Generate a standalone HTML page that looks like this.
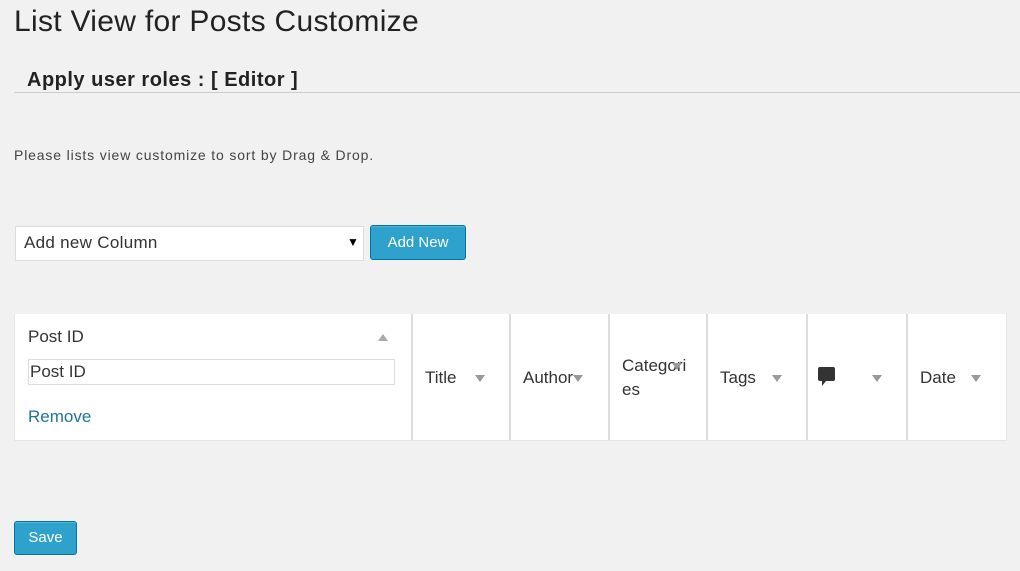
<!DOCTYPE html>
<html><head><style>
body{margin:0;width:1020px;height:571px;background:#f1f1f1;font-family:"Liberation Sans",sans-serif;color:#444;position:relative;overflow:hidden}
.a{position:absolute;white-space:nowrap}
.btn{position:absolute;background:#2ea2cc;border:1px solid #0074a2;border-radius:3px;color:#fff;font-size:15px;box-sizing:border-box;text-align:center;box-shadow:inset 0 1px 0 rgba(120,200,230,.5)}
.col{position:absolute;top:314px;height:126px;background:#fff;border-right:2px solid #ddd;box-sizing:border-box}
.arr{position:absolute;width:0;height:0;border-left:5px solid transparent;border-right:5px solid transparent;border-top:7px solid #999}
.lbl{position:absolute;top:54px;font-size:17px;color:#333}
</style></head><body>
<div class="a" style="left:14px;top:5px;font-size:30px;color:#222;letter-spacing:0.3px">List View for Posts Customize</div>
<div class="a" style="left:27px;top:69px;font-size:20px;font-weight:bold;color:#222;letter-spacing:0.5px">Apply user roles : [ Editor ]</div>
<div class="a" style="left:14px;top:92px;width:1006px;height:1px;background:#ccc"></div>
<div class="a" style="left:14px;top:147px;font-size:14px;color:#444;letter-spacing:0.85px">Please lists view customize to sort by Drag &amp; Drop.</div>
<div class="a" style="left:15px;top:226px;width:349px;height:35px;background:#fff;border:1px solid #ddd;box-sizing:border-box"></div>
<div class="a" style="left:24px;top:233px;font-size:17px;color:#333;letter-spacing:0.3px">Add new Column</div>
<div class="a" style="left:347px;top:235px;font-size:12px;color:#000">▼</div>
<div class="btn" style="left:370px;top:225px;width:96px;height:35px;line-height:33px">Add New</div>

<div class="a" style="left:14px;top:314px;width:993px;height:127px;background:#fff;border:1px solid #e5e5e5;box-sizing:border-box"></div>
<div class="col" style="left:14px;width:399px;border-left:1px solid #e5e5e5">
 <div class="a" style="left:13px;top:13px;font-size:17px;color:#333">Post ID</div>
 <div class="arr" style="left:363px;top:20px;border-top:0;border-bottom:7px solid #aaa"></div>
 <div class="a" style="left:13px;top:45px;width:367px;height:26px;border:1px solid #ddd;box-sizing:border-box;font-size:17px;color:#333;padding-left:1px;line-height:24px">Post ID</div>
 <div class="a" style="left:13px;top:93px;font-size:17px;color:#21759b">Remove</div>
</div>
<div class="col" style="left:413px;width:98px"><div class="lbl" style="left:12px">Title</div><div class="arr" style="left:62px;top:61px"></div></div>
<div class="col" style="left:511px;width:99px"><div class="lbl" style="left:12px">Author</div><div class="arr" style="left:62px;top:61px"></div></div>
<div class="col" style="left:610px;width:98px"><div class="a" style="left:12px;top:40px;font-size:17px;color:#333;line-height:24px">Categori<br>es</div><div class="arr" style="left:62px;top:49px"></div></div>
<div class="col" style="left:708px;width:100px"><div class="lbl" style="left:12px">Tags</div><div class="arr" style="left:64px;top:61px"></div></div>
<div class="col" style="left:808px;width:100px">
 <svg class="a" style="left:10px;top:53px" width="18" height="20" viewBox="0 0 18 20"><path d="M2 0h13a2 2 0 0 1 2 2v10a2 2 0 0 1-2 2H8l-4 5v-5H2a2 2 0 0 1-2-2V2a2 2 0 0 1 2-2z" fill="#333"/></svg>
 <div class="arr" style="left:64px;top:61px"></div></div>
<div class="col" style="left:908px;width:99px;border-right:1px solid #e5e5e5"><div class="lbl" style="left:12px">Date</div><div class="arr" style="left:63px;top:61px"></div></div>

<div class="btn" style="left:14px;top:521px;width:63px;height:34px;line-height:32px">Save</div>
</body></html>
